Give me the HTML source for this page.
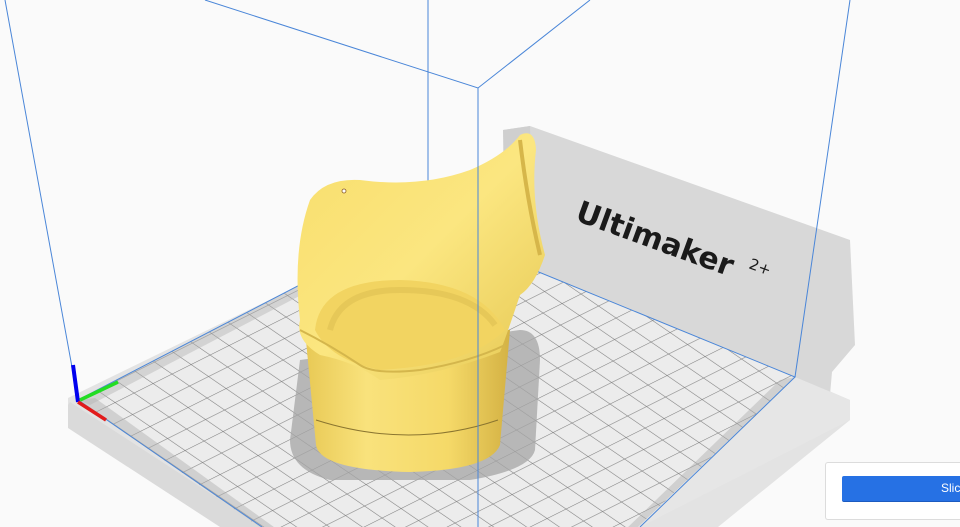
<!DOCTYPE html>
<html><head><meta charset="utf-8"><style>
html,body{margin:0;padding:0;background:#fafafa;width:960px;height:527px;overflow:hidden;font-family:"Liberation Sans",sans-serif}
svg{position:absolute;left:0;top:0}
.panel{position:absolute;left:825px;top:462px;width:135px;height:58px;background:#fff;border:1px solid #dcdcdc;border-right:none;border-radius:3px 0 0 3px;box-sizing:border-box}
.btn{position:absolute;left:842px;top:476px;width:118px;height:25px;background:#2671e4;border-bottom:1px solid #1c5bc0;color:#fff;font-size:12px;line-height:25px;text-indent:99px;border-radius:2px 0 0 2px;overflow:hidden;white-space:nowrap}
</style></head><body>
<svg width="960" height="527" viewBox="0 0 960 527">
<defs>
<pattern id="g" width="10" height="10" patternUnits="userSpaceOnUse" patternTransform="matrix(1.9,-0.95,1.75,1.2,78,400)">
<rect width="10" height="10" fill="#ececec"/>
<path d="M0 0H10M0 0V10" stroke="#7f7f7f" stroke-width="0.6" fill="none"/>
</pattern>
<clipPath id="bed"><polygon points="78,400 419,223 795,377 478,680"/></clipPath>
<clipPath id="vp"><rect width="960" height="527"/></clipPath>
<linearGradient id="cy" x1="0" x2="1">
<stop offset="0" stop-color="#e8c955"/><stop offset="0.3" stop-color="#f9e27c"/><stop offset="0.7" stop-color="#f5d968"/><stop offset="1" stop-color="#d4b244"/>
</linearGradient>
<linearGradient id="top" x1="0" y1="0" x2="1" y2="1">
<stop offset="0" stop-color="#f8de6c"/><stop offset="0.5" stop-color="#fbe680"/><stop offset="1" stop-color="#e6c853"/>
</linearGradient>
</defs>
<g clip-path="url(#vp)">
<polygon points="68,398 300,285 420,215 850,400 850,420 480,720 262,527 68,415" fill="#e3e3e3"/>
<polygon points="68,405 68,428 240,540 262,527 70,402" fill="#dadada"/>
<polygon points="503,130 530,126 850,240 855,345 832,372 830,395 535,272" fill="#d8d8d8"/>
<polygon points="503,130 530,126 535,272 505,262" fill="#cfcfcf"/>
<polygon points="795,377 850,400 850,420 640,527 600,527" fill="#e6e6e6"/>
<text x="0" y="0" transform="translate(574,220) rotate(20)" font-family="'DejaVu Sans',sans-serif" font-weight="bold" font-size="30" fill="#1a1a1a">Ultimaker</text>
<text x="0" y="0" transform="translate(748,268) rotate(20)" font-family="'DejaVu Sans',sans-serif" font-size="15" fill="#1a1a1a">2+</text>
<g clip-path="url(#bed)">
<rect width="960" height="700" fill="url(#g)"/>
<polygon points="78,400 419,223 430,228 90,405" fill="#b0b0b0" opacity="0.4"/>
<polygon points="78,400 95,398 500,690 478,680" fill="#b0b0b0" opacity="0.45"/>
<polygon points="795,377 780,380 470,680 478,680" fill="#b0b0b0" opacity="0.45"/>
<path d="M300 360 L520 330 Q540 330 540 360 L535 450 Q530 470 470 480 L330 480 Q290 470 290 440 Z" fill="#a6a6a6" opacity="0.75"/>
</g>
<g stroke="#4a86d8" stroke-width="1" fill="none">
<path d="M5 0 L78 400 L419 223"/>
<path d="M78 400 L262 527"/>
<path d="M419 223 L795 377 L640 527"/>
<path d="M850 0 L795 377"/>
<path d="M428 0 L428 225"/>
<path d="M205 0 L478 88 L590 0"/>
</g>
<path d="M305 330 L510 330 L500 445 Q490 470 410 472 Q320 470 316 445 Z" fill="url(#cy)"/>
<path d="M316 420 Q410 450 498 420" stroke="#8a7530" stroke-width="1" fill="none"/>
<path d="M300 320 Q292 250 310 200 Q325 178 360 180 Q420 188 470 170 Q505 155 520 135 Q535 128 536 150 Q530 200 545 255 Q535 285 520 295 Q505 340 500 352 Q440 375 380 380 Q355 362 320 355 Q295 340 300 320 Z" fill="url(#top)"/>
<path d="M315 330 Q320 280 400 280 Q480 282 505 330 Q470 365 380 370 Q330 360 315 330 Z" fill="#f2d461"/>
<path d="M330 330 Q340 290 400 290 Q470 290 495 325" stroke="#ddbf52" stroke-width="6" fill="none" opacity="0.6"/>
<path d="M520 140 Q527 200 540 255" stroke="#d6b64a" stroke-width="4" fill="none"/>
<path d="M300 330 Q330 345 360 365 Q375 375 420 370 Q470 362 505 345" stroke="#d4b64c" stroke-width="2" fill="none"/>
<circle cx="344" cy="191" r="2" fill="#fff" stroke="#8a5a20" stroke-width="0.8"/>
<path d="M478 88 L478 527" stroke="#4a86d8" stroke-width="1"/>
<path d="M73 365 L78 402" stroke="#0000ee" stroke-width="4"/>
<path d="M80 400 L118 382" stroke="#22dd22" stroke-width="3.5"/>
<path d="M78 402 L106 420" stroke="#e21b1b" stroke-width="3.5"/>
</g>
</svg>
<div class="panel"></div>
<div class="btn">Slice</div>
</body></html>
